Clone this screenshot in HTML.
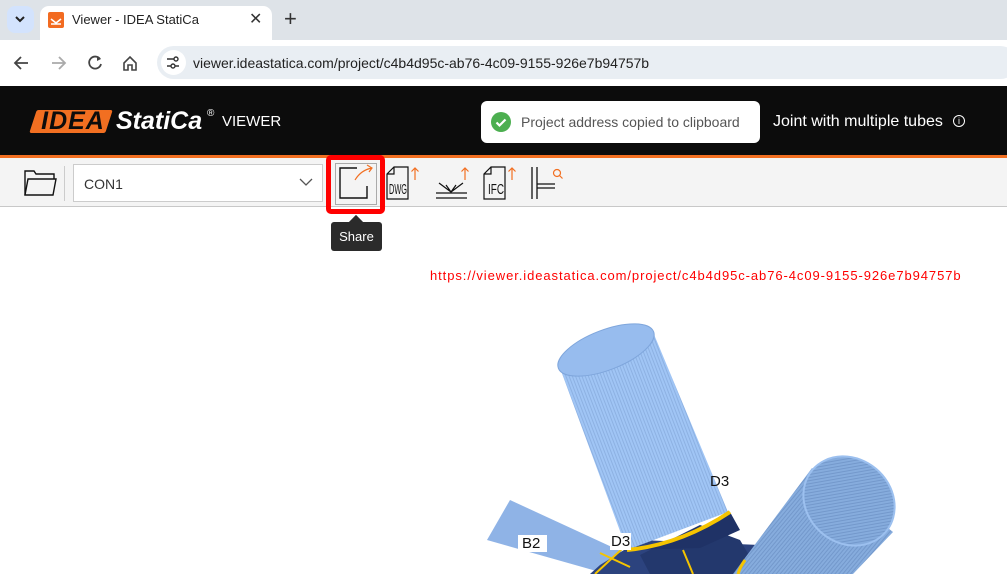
<!DOCTYPE html>
<html><head><meta charset="utf-8">
<style>
*{margin:0;padding:0;box-sizing:border-box}
body{width:1007px;height:574px;overflow:hidden;background:#fff;font-family:"Liberation Sans",sans-serif;position:relative}
.abs{position:absolute}
</style></head><body>
<!-- tab bar -->
<div class="abs" style="left:0;top:0;width:1007px;height:40px;background:#dee3e8"></div>
<div class="abs" style="left:7px;top:6px;width:27px;height:27px;border-radius:8px;background:#d3e3fd"></div>
<svg class="abs" style="left:13px;top:14px" width="14" height="10"><path d="M3 3l4 4 4-4" stroke="#222" stroke-width="2" fill="none"/></svg>
<div class="abs" style="left:40px;top:6px;width:232px;height:34px;background:#fff;border-radius:9px 9px 0 0"></div>
<div class="abs" style="left:48px;top:12px;width:16px;height:16px;background:#f26b21;border-radius:2px"></div>
<svg class="abs" style="left:48px;top:12px" width="16" height="16"><path d="M3 7l5 4 5-4M3 12h10" stroke="#fff" stroke-width="1.6" fill="none"/></svg>
<div class="abs" style="left:72px;top:12px;font-size:13px;color:#222">Viewer - IDEA StatiCa</div>
<div class="abs" style="left:249px;top:9px;font-size:16px;color:#333">✕</div>
<div class="abs" style="left:284px;top:6px;font-size:22px;color:#333">+</div>
<!-- address bar -->
<div class="abs" style="left:0;top:40px;width:1007px;height:46px;background:#fff"></div>
<svg class="abs" style="left:12px;top:52px" width="140" height="22">
<path d="M16 11H4M9 5l-6 6 6 6" stroke="#444" stroke-width="1.8" fill="none"/>
<path d="M40 11h12M47 5l6 6-6 6" stroke="#aaa" stroke-width="1.8" fill="none"/>
<path d="M88 7a6 6 0 1 0 1 5" stroke="#444" stroke-width="1.8" fill="none"/><path d="M85 4l4 3-4 2z" fill="#444"/>
<path d="M112 11l6-6 6 6v7h-4v-5h-4v5h-4z" stroke="#444" stroke-width="1.6" fill="none"/>
</svg>
<div class="abs" style="left:157px;top:46px;width:860px;height:33px;background:#e9eef3;border-radius:17px"></div>
<div class="abs" style="left:161px;top:50px;width:25px;height:25px;background:#fff;border-radius:50%"></div>
<svg class="abs" style="left:165px;top:55px" width="16" height="16"><path d="M2 4h7M2 11h4M10 11h4" stroke="#333" stroke-width="1.5"/><circle cx="11" cy="4" r="2" stroke="#333" fill="none" stroke-width="1.4"/><circle cx="8" cy="11" r="2" stroke="#333" fill="none" stroke-width="1.4"/></svg>
<div class="abs" style="left:193px;top:55px;font-size:14px;color:#222">viewer.ideastatica.com/project/c4b4d95c-ab76-4c09-9155-926e7b94757b</div>
<!-- header -->
<div class="abs" style="left:0;top:86px;width:1007px;height:69px;background:#0c0c0c"></div>
<div class="abs" style="left:0;top:155px;width:1007px;height:3px;background:#f26f21"></div>
<div class="abs" style="left:33px;top:110px;width:76px;height:23px;background:#f26f21;transform:skewX(-18deg);border-radius:2px"></div>
<div class="abs" style="left:37px;top:106px;width:72px;font-size:25px;font-weight:bold;font-style:italic;color:#0c0c0c;letter-spacing:1px;text-align:center;line-height:31px">IDEA</div>
<div class="abs" style="left:116px;top:106px;font-size:25px;font-weight:bold;font-style:italic;color:#fff;line-height:31px">StatiCa</div>
<div class="abs" style="left:207px;top:108px;font-size:10px;color:#fff">®</div>
<div class="abs" style="left:222px;top:113px;font-size:15px;color:#fff">VIEWER</div>
<div class="abs" style="left:481px;top:101px;width:279px;height:42px;background:#fff;border-radius:6px"></div>
<div class="abs" style="left:491px;top:112px;width:20px;height:20px;background:#4caf50;border-radius:50%"></div>
<svg class="abs" style="left:491px;top:112px" width="20" height="20"><path d="M5.5 10.5l3 3 6-6" stroke="#fff" stroke-width="2.2" fill="none"/></svg>
<div class="abs" style="left:521px;top:114px;font-size:14px;color:#555">Project address copied to clipboard</div>
<div class="abs" style="left:773px;top:113px;font-size:16px;color:#fff">Joint with multiple tubes</div>
<div class="abs" style="left:953px;top:115px;width:12px;height:12px;border:1.3px solid #fff;border-radius:50%;color:#fff;font-size:9px;text-align:center;line-height:10px">i</div>
<!-- toolbar -->
<div class="abs" style="left:0;top:158px;width:1007px;height:49px;background:#f4f4f4;border-bottom:1px solid #c8c8c8"></div>
<svg class="abs" style="left:22px;top:168px" width="36" height="30"><path d="M3 27V3h9l2 3h18v5" stroke="#111" stroke-width="1.4" fill="none"/><path d="M3 27l3-16h28l-3 16z" stroke="#111" stroke-width="1.4" fill="none"/></svg>
<div class="abs" style="left:64px;top:166px;width:1px;height:35px;background:#ccc"></div>
<div class="abs" style="left:73px;top:164px;width:250px;height:38px;background:#fff;border:1px solid #ccc"></div>
<div class="abs" style="left:84px;top:176px;font-size:14px;color:#333">CON1</div>
<svg class="abs" style="left:299px;top:178px" width="14" height="9"><path d="M1 1l6 6 6-6" stroke="#555" stroke-width="1.3" fill="none"/></svg>
<div class="abs" style="left:326px;top:155px;width:59px;height:59px;border:5px solid #f00;border-radius:5px"></div>
<div class="abs" style="left:335px;top:163px;width:42px;height:42px;border:1px solid #aaa"></div>
<svg class="abs" style="left:335px;top:163px" width="42" height="42"><path d="M22 5H5v30h27V23" stroke="#111" stroke-width="1.4" fill="none"/><path d="M20 17q6-10 17-12M32 2l5 3-3 4" stroke="#f26f21" stroke-width="1.2" fill="none"/></svg>
<svg class="abs" style="left:380px;top:160px" width="190" height="45">
<path d="M14 7h14v32H7V14z M7 14h7V7" stroke="#111" stroke-width="1.2" fill="none"/>
<text x="9" y="34" font-family="Liberation Sans" font-size="15" fill="#111" textLength="18" lengthAdjust="spacingAndGlyphs">DWG</text>
<path d="M35 20V8M31.5 11.5l3.5-3.5 3.5 3.5" stroke="#f26f21" stroke-width="1.2" fill="none"/>
<path d="M56 33h31M56 38h31M59 23l12 9 12-9M66 25l5 7 5-7" stroke="#111" stroke-width="1.2" fill="none"/>
<path d="M85 20V8M81.5 11.5l3.5-3.5 3.5 3.5" stroke="#f26f21" stroke-width="1.2" fill="none"/>
<path d="M111 7h14v32H104V14z M104 14h7V7" stroke="#111" stroke-width="1.2" fill="none"/>
<text x="108" y="34" font-family="Liberation Sans" font-size="15" fill="#111" textLength="16" lengthAdjust="spacingAndGlyphs">IFC</text>
<path d="M132 20V8M128.5 11.5l3.5-3.5 3.5 3.5" stroke="#f26f21" stroke-width="1.2" fill="none"/>
<path d="M152 7v32M157 7v32M157 24h18M157 28h18" stroke="#111" stroke-width="1.3" fill="none"/>
<circle cx="177" cy="13" r="3.5" stroke="#f26f21" stroke-width="1.2" fill="none"/><path d="M179.5 15.5l3 3" stroke="#f26f21" stroke-width="1.2"/>
</svg>
<!-- tooltip -->
<div class="abs" style="left:351px;top:217px;width:10px;height:10px;background:#2b2b2b;transform:rotate(45deg)"></div>
<div class="abs" style="left:331px;top:222px;width:51px;height:29px;background:#2b2b2b;border-radius:3px;color:#fff;font-size:13px;text-align:center;line-height:29px">Share</div>
<div class="abs" style="left:430px;top:268px;font-size:13px;color:#f00;letter-spacing:0.92px">https://viewer.ideastatica.com/project/c4b4d95c-ab76-4c09-9155-926e7b94757b</div>
<!-- 3D model -->
<svg class="abs" style="left:0;top:0" width="1007" height="574">
<defs><pattern id="h" width="3" height="3" patternUnits="userSpaceOnUse" patternTransform="rotate(-21)"><rect width="3" height="3" fill="#a0c5f5"/><rect width="1" height="3" fill="#8db1e2"/></pattern>
<pattern id="h2" width="3" height="3" patternUnits="userSpaceOnUse" patternTransform="rotate(40)"><rect width="3" height="3" fill="#86acdd"/><rect width="1" height="3" fill="#7398cb"/></pattern></defs>
<polygon points="487,540 510,500 640,560 620,574 607,574" fill="#8fb3e6"/>
<polygon points="600,565 640,540 760,545 780,574 590,574" fill="#2c437e"/>
<polygon points="640,555 700,525 740,540 760,574 650,574" fill="#23386d"/>
<path d="M627,550 Q680,545 730,512 L740,530 L700,548 Z" fill="#1f3266"/>
<polygon points="560,368 653,332 728,512 627,550" fill="url(#h)"/>
<ellipse cx="606" cy="350" rx="51" ry="20" transform="rotate(-21 606 350)" fill="#97bcee" stroke="#7fa6dc"/>
<path d="M627,550 Q680,545 730,512" stroke="#f5c400" stroke-width="4" fill="none"/>
<path d="M623,548 L595,574" stroke="#f5c400" stroke-width="2"/>
<line x1="683" y1="550" x2="693" y2="574" stroke="#f5c400" stroke-width="2"/>
<polygon points="812,468 893,532 853,574 733,574" fill="url(#h2)"/>
<ellipse cx="849" cy="501" rx="48" ry="42" transform="rotate(40 849 501)" fill="url(#h2)" stroke="#9cc0ef" stroke-width="2"/>
<path d="M745,560 Q740,567 738,574" stroke="#f5c400" stroke-width="3" fill="none"/>
<line x1="600" y1="553" x2="630" y2="567" stroke="#f5c400" stroke-width="2"/>
<rect x="518" y="535" width="29" height="17" fill="#fff"/>
</svg>
<div class="abs" style="left:522px;top:535px;font-size:15px;color:#111">B2</div>
<div class="abs" style="left:610px;top:533px;font-size:15px;color:#111;background:#fff;padding:0 1px">D3</div>
<div class="abs" style="left:710px;top:473px;font-size:15px;color:#111">D3</div>
</body></html>
